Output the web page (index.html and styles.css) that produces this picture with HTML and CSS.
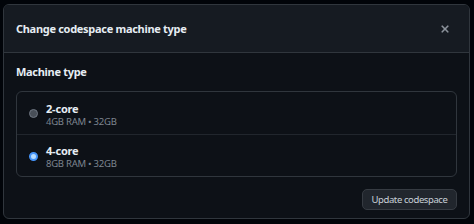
FILE: index.html
```html
<!DOCTYPE html>
<html lang="en">
<head>
<meta charset="utf-8">
<title>Change codespace machine type</title>
<link rel="stylesheet" href="styles.css">
</head>
<body>
<div class="dialog">
  <div class="dialog-header">
    <h1 class="dialog-title">Change codespace machine type</h1>
    <button class="close" aria-label="Close">
      <svg width="12" height="12" viewBox="0 0 16 16"><path d="M3.72 3.72a.75.75 0 0 1 1.06 0L8 6.94l3.22-3.22a.75.75 0 1 1 1.06 1.06L9.06 8l3.22 3.22a.75.75 0 1 1-1.06 1.06L8 9.06l-3.22 3.22a.75.75 0 0 1-1.06-1.06L6.94 8 3.72 4.78a.75.75 0 0 1 0-1.06Z" fill="currentColor" stroke="currentColor" stroke-width="0.6"/></svg>
    </button>
  </div>
  <div class="dialog-body">
    <h2 class="section-title">Machine type</h2>
    <div class="options">
      <label class="option">
        <span class="radio"></span>
        <span class="option-text">
          <span class="option-name">2-core</span>
          <span class="option-desc">4GB RAM • 32GB</span>
        </span>
      </label>
      <label class="option">
        <span class="radio checked"></span>
        <span class="option-text">
          <span class="option-name">4-core</span>
          <span class="option-desc">8GB RAM • 32GB</span>
        </span>
      </label>
    </div>
    <div class="footer">
      <button class="btn">Update codespace</button>
    </div>
  </div>
</div>
</body>
</html>
```
FILE: styles.css
```css
html, body {
  margin: 0;
  padding: 0;
  background: #010409;
}
body {
  padding: 4px 4px 0 3px;
  font-family: "Noto Sans", "Liberation Sans", sans-serif;
  color: #e6edf3;
}
.dialog {
  width: 465px;
  height: 213px;
  border: 1px solid #30363d;
  border-radius: 6px;
  background: #0d1117;
  overflow: hidden;
  display: flex;
  flex-direction: column;
}
.dialog-header {
  height: 48px;
  background: #161b22;
  border-bottom: 1px solid #30363d;
  display: flex;
  align-items: center;
  justify-content: space-between;
  padding: 0 18px 0 12px;
  box-sizing: border-box;
  flex: none;
}
.dialog-title {
  margin: 0;
  font-size: 11px;
  font-weight: 700;
  letter-spacing: -0.3px;
  line-height: 16px;
  color: #e6edf3;
}
.close {
  background: none;
  border: 0;
  padding: 0;
  color: #9198a1;
  display: flex;
  width: 12px;
  height: 12px;
}
.dialog-body {
  padding: 11px 12px 0 12px;
  display: flex;
  flex-direction: column;
}
.section-title {
  margin: 0 0 11px;
  font-size: 11px;
  font-weight: 700;
  letter-spacing: -0.3px;
  line-height: 16px;
  color: #e6edf3;
}
.options {
  border: 1px solid #30363d;
  border-radius: 6px;
}
.option {
  display: flex;
  align-items: center;
  height: 42px;
  padding: 3px 0 0 12px;
  box-sizing: border-box;
}
.option + .option {
  border-top: 1px solid #21262d;
}
.radio {
  width: 9px;
  height: 9px;
  border-radius: 50%;
  box-sizing: border-box;
  border: 1px solid #6e7681;
  background: #484f58;
  margin-right: 8px;
  margin-top: -2px;
  flex: none;
}
.radio.checked {
  background: #b6dcff;
  border: 2px solid #4493f8;
}
.option-text {
  display: flex;
  flex-direction: column;
}
.option-name {
  font-size: 11px;
  font-weight: 700;
  letter-spacing: -0.2px;
  line-height: 13px;
  color: #e6edf3;
}
.option-desc {
  font-size: 9.5px;
  letter-spacing: -0.25px;
  line-height: 13px;
  color: #7d8590;
}
.footer {
  display: flex;
  justify-content: flex-end;
  margin-top: 12px;
}
.btn {
  font-family: inherit;
  font-size: 9.5px;
  letter-spacing: -0.4px;
  color: #c9d1d9;
  background: #21262d;
  border: 1px solid #363b42;
  border-radius: 5px;
  height: 21px;
  width: 95px;
  padding: 0;
}
```
